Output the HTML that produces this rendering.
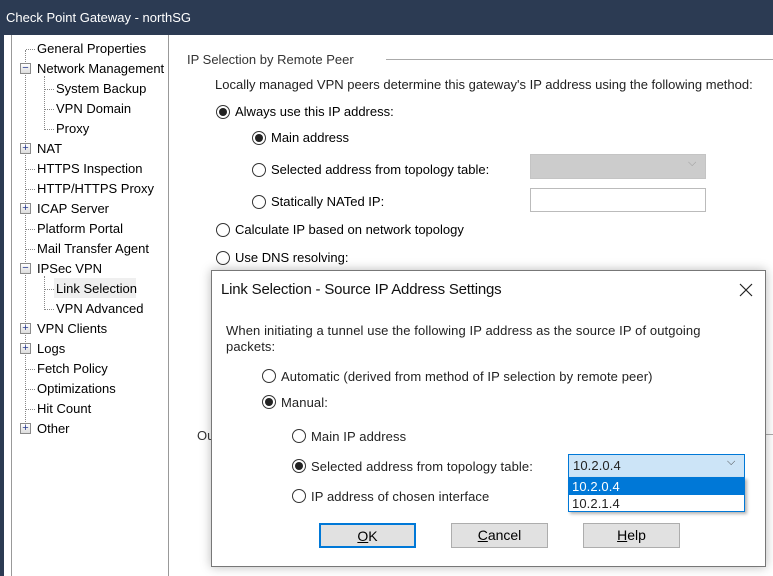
<!DOCTYPE html>
<html><head><meta charset="utf-8"><style>
*{margin:0;padding:0;box-sizing:border-box}
body{width:773px;height:576px;overflow:hidden;background:#fff;font-family:"Liberation Sans",sans-serif;font-size:13px;color:#000;position:relative}
.a{position:absolute;white-space:nowrap}
.title{left:0;top:0;width:773px;height:35px;background:#2c3b53;color:#fff;font-size:13px;padding:10px 0 0 6px}
.rb{position:absolute;width:14px;height:14px;border:1px solid #333;border-radius:50%;background:#fff}
.rb.on::after{content:"";position:absolute;left:2px;top:2px;width:8px;height:8px;border-radius:50%;background:#222}
.pm{position:absolute;width:11px;height:11px;border:1px solid #8a8a8a;background:linear-gradient(#fff,#ddd);font-size:11px;line-height:8px;text-align:center;color:#2a3d8f}
.dot{position:absolute;border-top:1px dotted #888}
.vdot{position:absolute;border-left:1px dotted #888}
.btn{position:absolute;height:25px;width:97px;background:#e1e1e1;border:1px solid #adadad;text-align:center;line-height:23px;font-size:14px}
.d{font-family:"Liberation Sans",sans-serif;font-size:13px;letter-spacing:0.1px;color:#222}
</style></head><body>
<div class="a title">Check Point Gateway - northSG</div>
<div class="a" style="left:0;top:35px;width:4px;height:541px;background:#2c3b53"></div>
<div class="a" style="left:11px;top:35px;width:1px;height:541px;background:#999"></div>
<div class="a" style="left:168px;top:35px;width:1px;height:541px;background:#999"></div>

<!-- tree -->
<div class="vdot" style="left:25px;top:50px;height:380px"></div>
<div class="vdot" style="left:44px;top:76px;height:54px"></div>
<div class="vdot" style="left:44px;top:276px;height:34px"></div>
<div class="dot" style="left:26px;top:49px;width:9px"></div>
<div class="dot" style="left:26px;top:169px;width:9px"></div>
<div class="dot" style="left:26px;top:189px;width:9px"></div>
<div class="dot" style="left:26px;top:229px;width:9px"></div>
<div class="dot" style="left:26px;top:249px;width:9px"></div>
<div class="dot" style="left:26px;top:369px;width:9px"></div>
<div class="dot" style="left:26px;top:389px;width:9px"></div>
<div class="dot" style="left:26px;top:409px;width:9px"></div>
<div class="dot" style="left:45px;top:89px;width:9px"></div>
<div class="dot" style="left:45px;top:109px;width:9px"></div>
<div class="dot" style="left:45px;top:129px;width:9px"></div>
<div class="dot" style="left:45px;top:289px;width:9px"></div>
<div class="dot" style="left:45px;top:309px;width:9px"></div>
<div class="pm" style="left:20px;top:63px">−</div>
<div class="pm" style="left:20px;top:143px">+</div>
<div class="pm" style="left:20px;top:203px">+</div>
<div class="pm" style="left:20px;top:263px">−</div>
<div class="pm" style="left:20px;top:323px">+</div>
<div class="pm" style="left:20px;top:343px">+</div>
<div class="pm" style="left:20px;top:423px">+</div>
<div class="a" style="left:54px;top:278px;width:82px;height:20px;background:#efefef"></div>
<div class="a" style="left:37px;top:41px;line-height:16px">General Properties</div>
<div class="a" style="left:37px;top:61px;line-height:16px">Network Management</div>
<div class="a" style="left:56px;top:81px;line-height:16px">System Backup</div>
<div class="a" style="left:56px;top:101px;line-height:16px">VPN Domain</div>
<div class="a" style="left:56px;top:121px;line-height:16px">Proxy</div>
<div class="a" style="left:37px;top:141px;line-height:16px">NAT</div>
<div class="a" style="left:37px;top:161px;line-height:16px">HTTPS Inspection</div>
<div class="a" style="left:37px;top:181px;line-height:16px">HTTP/HTTPS Proxy</div>
<div class="a" style="left:37px;top:201px;line-height:16px">ICAP Server</div>
<div class="a" style="left:37px;top:221px;line-height:16px">Platform Portal</div>
<div class="a" style="left:37px;top:241px;line-height:16px">Mail Transfer Agent</div>
<div class="a" style="left:37px;top:261px;line-height:16px">IPSec VPN</div>
<div class="a" style="left:56px;top:281px;line-height:16px">Link Selection</div>
<div class="a" style="left:56px;top:301px;line-height:16px">VPN Advanced</div>
<div class="a" style="left:37px;top:321px;line-height:16px">VPN Clients</div>
<div class="a" style="left:37px;top:341px;line-height:16px">Logs</div>
<div class="a" style="left:37px;top:361px;line-height:16px">Fetch Policy</div>
<div class="a" style="left:37px;top:381px;line-height:16px">Optimizations</div>
<div class="a" style="left:37px;top:401px;line-height:16px">Hit Count</div>
<div class="a" style="left:37px;top:421px;line-height:16px">Other</div>

<!-- right pane -->
<div class="a" style="left:187px;top:52px;color:#333">IP Selection by Remote Peer</div>
<div class="a" style="left:386px;top:59px;width:387px;height:1px;background:#aaa"></div>
<div class="a" style="left:215px;top:77px;color:#222">Locally managed VPN peers determine this gateway's IP address using the following method:</div>
<div class="rb on" style="left:216px;top:105px"></div><div class="a" style="left:235px;top:104px">Always use this IP address:</div>
<div class="rb on" style="left:252px;top:131px"></div><div class="a" style="left:271px;top:130px">Main address</div>
<div class="rb" style="left:252px;top:163px"></div><div class="a" style="left:271px;top:162px">Selected address from topology table:</div>
<div class="a" style="left:530px;top:154px;width:176px;height:25px;background:#ccc;border:1px solid #c4c4c4"></div>
<div class="a" style="left:688px;top:157px;color:#999;font-size:11px">⌵</div>
<div class="rb" style="left:252px;top:195px"></div><div class="a" style="left:271px;top:194px">Statically NATed IP:</div>
<div class="a" style="left:530px;top:188px;width:176px;height:24px;background:#fff;border:1px solid #bbb"></div>
<div class="rb" style="left:216px;top:223px"></div><div class="a" style="left:235px;top:222px">Calculate IP based on network topology</div>
<div class="rb" style="left:216px;top:251px"></div><div class="a" style="left:235px;top:250px">Use DNS resolving:</div>
<div class="a" style="left:197px;top:428px;color:#333">Ou</div>
<div class="a" style="left:764px;top:434px;width:9px;height:1px;background:#aaa"></div>

<!-- dialog -->
<div class="a" style="left:211px;top:270px;width:555px;height:297px;background:#fff;border:1px solid #777;box-shadow:0 0 10px rgba(0,0,0,.28)"></div>
<div class="a" style="left:221px;top:281px;font-size:15px;color:#111;letter-spacing:-0.2px">Link Selection - Source IP Address Settings</div>
<svg class="a" style="left:739px;top:283px" width="14" height="14"><path d="M1 1L13 13M13 1L1 13" stroke="#222" stroke-width="1.2"/></svg>
<div class="a d" style="left:226px;top:323px">When initiating a tunnel use the following IP address as the source IP of outgoing</div>
<div class="a d" style="left:226px;top:339px">packets:</div>
<div class="rb" style="left:262px;top:369px"></div><div class="a d" style="left:281px;top:369px">Automatic (derived from method of IP selection by remote peer)</div>
<div class="rb on" style="left:262px;top:395px"></div><div class="a d" style="left:281px;top:395px">Manual:</div>
<div class="rb" style="left:292px;top:429px"></div><div class="a d" style="left:311px;top:429px">Main IP address</div>
<div class="rb on" style="left:292px;top:459px"></div><div class="a d" style="left:311px;top:459px">Selected address from topology table:</div>
<div class="rb" style="left:292px;top:489px"></div><div class="a d" style="left:311px;top:489px">IP address of chosen interface</div>
<div class="a" style="left:568px;top:454px;width:177px;height:24px;background:#cce4f7;border:1px solid #0078d7"></div>
<div class="a d" style="left:573px;top:458px">10.2.0.4</div>
<div class="a" style="left:727px;top:456px;font-size:11px;color:#444">⌵</div>
<div class="a" style="left:568px;top:477px;width:177px;height:35px;background:#fff;border:1px solid #0078d7;box-shadow:2px 2px 3px rgba(0,0,0,.3)"></div>
<div class="a" style="left:569px;top:478px;width:175px;height:17px;background:#0078d7"></div>
<div class="a d" style="left:572px;top:479px;color:#fff">10.2.0.4</div>
<div class="a d" style="left:572px;top:496px">10.2.1.4</div>
<div class="btn" style="left:319px;top:523px;border:2px solid #0078d7"><u>O</u>K</div>
<div class="btn" style="left:451px;top:523px"><u>C</u>ancel</div>
<div class="btn" style="left:583px;top:523px"><u>H</u>elp</div>
</body></html>
